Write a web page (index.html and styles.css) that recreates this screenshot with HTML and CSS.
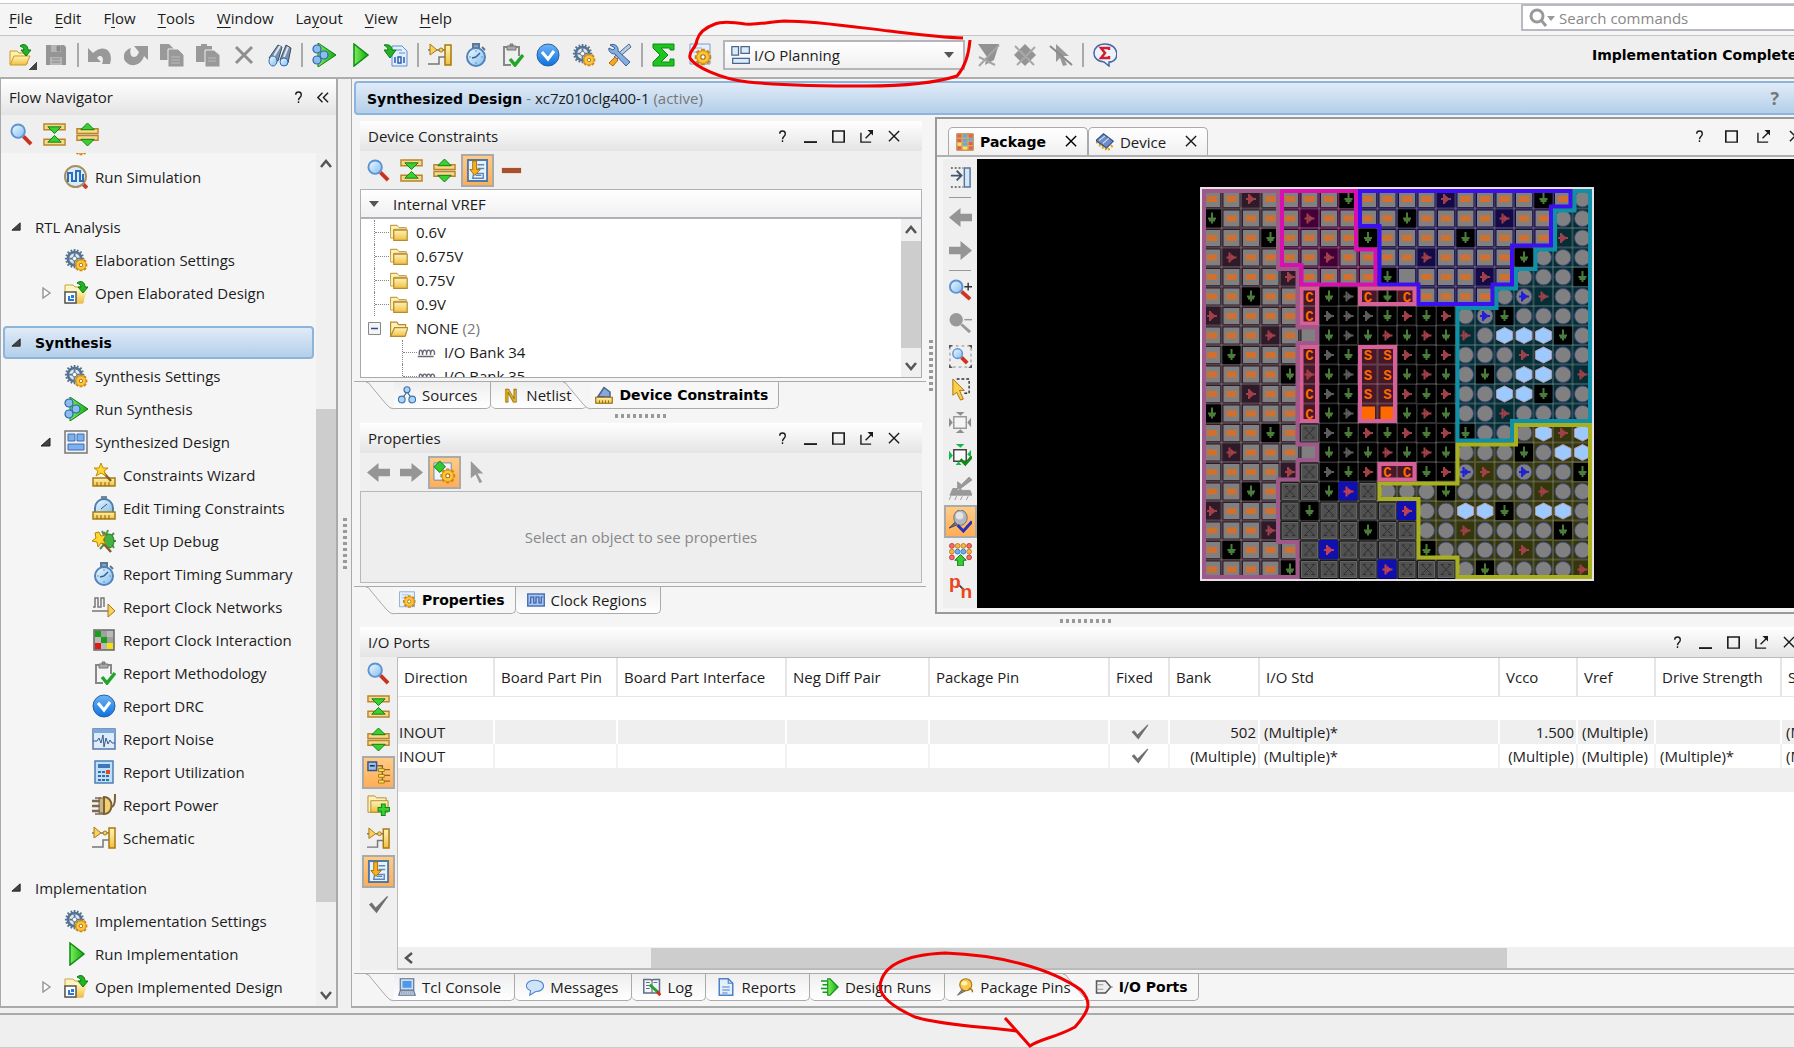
FILE: index.html
```html
<!DOCTYPE html>
<html lang="en">

<head>
  <meta charset="UTF-8">
  <meta name="viewport" content="width=device-width, initial-scale=1.0">
  <title>Synthesized Design - I/O Planning</title>
  <link rel="stylesheet" href="styles.css">
</head>
<body>
  <!-- icon sprite -->
  <svg class="sprite" aria-hidden="true">
    <defs>
      <linearGradient id="gold" x1="0" y1="0" x2="0" y2="1"><stop offset="0" stop-color="#fff3b8"/><stop offset="1" stop-color="#f0c040"/></linearGradient>
      <linearGradient id="sky" x1="0" y1="0" x2="1" y2="1"><stop offset="0" stop-color="#f4fbff"/><stop offset="1" stop-color="#7fbdf0"/></linearGradient>
      <linearGradient id="lime" x1="0" y1="0" x2="1" y2="0"><stop offset="0" stop-color="#7df05a"/><stop offset="1" stop-color="#12a812"/></linearGradient>
      <linearGradient id="royal" x1="0" y1="0" x2="0" y2="1"><stop offset="0" stop-color="#6fb4f5"/><stop offset="1" stop-color="#0a72e0"/></linearGradient>
      <g id="greenArrow"><path d="M12 3c4-3 8-1 8 4h3l-5 6-5-6h3c0-2-2-3-4-4z" fill="#22b422" stroke="#0b7a12"/></g>
      <g id="cog"><path d="M12 1v22M1 12h22M4 4l16 16M20 4L4 20M8 2l8 20M16 2L8 22M2 8l20 8M2 16l20-8" stroke="#567391" stroke-width="2"/><circle cx="12" cy="12" r="7.500" fill="#dfe8f0" stroke="#567391" stroke-width="3"/><path d="M12 6v12M6 12h12" stroke="#567391" stroke-width="2"/><circle cx="12" cy="12" r="2.500" fill="#fff" stroke="#567391"/></g>
      <g id="goldCog"><path d="M12 1v22M1 12h22M4 4l16 16M20 4L4 20" stroke="#c98510" stroke-width="5"/><circle cx="12" cy="12" r="8.500" fill="#ffc63a" stroke="#d8961c" stroke-width="1.500"/><circle cx="12" cy="12" r="3" fill="#fff" stroke="#a86a08" stroke-width="1.500"/></g>
    </defs>
    <symbol id="i-open" viewBox="0 0 24 24"><path d="M2 8h7l2 2h8v11H2z" fill="#fdf0a8" stroke="#c99a2a"/><path d="M6 13h16l-4 9H2z" fill="url(#gold)" stroke="#c99a2a"/><use href="#greenArrow"/></symbol>
    <symbol id="i-save" viewBox="0 0 24 24"><path d="M2 2h18l2 2v18H2z" fill="#959595"/><path d="M7 2h10v7H7zM6 14h12v8H6z" fill="#b5b5b5"/><path d="M13 3h3v5h-3zM8 16h8M8 19h8" stroke="#8a8a8a" fill="#8a8a8a"/></symbol>
    <symbol id="i-undo" viewBox="0 0 24 24"><path d="M0 5v14h13l-4-4c3-4 8-2 5 6h8C26 8 16 0 5 10z" fill="#999"/></symbol>
    <symbol id="i-redo" viewBox="0 0 24 24"><path d="M24 3v14l-4-4c-2 8-11 12-17 7-6-5-3-13 4-15-2 5 0 9 3 9s4-3 5-5l-5-6z" fill="#999"/></symbol>
    <symbol id="i-copy" viewBox="0 0 24 24"><path d="M0 1h9l5 5v11H0z" fill="#999"/><path d="M8 6h10l6 6v12H8z" fill="#999" stroke="#eee"/><path d="M11 14h9M11 17h9M11 20h9" stroke="#bbb"/></symbol>
    <symbol id="i-paste" viewBox="0 0 24 24"><path d="M0 3h16v16H0zM5 1h6v3H5z" fill="#999"/><path d="M9 7h9l6 5v12H9z" fill="#999" stroke="#eee"/><path d="M12 15h8M12 18h8" stroke="#bbb"/></symbol>
    <symbol id="i-delete" viewBox="0 0 24 24"><path d="M4 4l16 16M20 4L4 20" stroke="#8f8f8f" stroke-width="3"/></symbol>
    <symbol id="i-find" viewBox="0 0 24 24"><path d="M10 2l4 2-4 14-9-3zM18 2l5 3-3 15-8-3z" fill="#7b8faa" stroke="#3b4d66"/><path d="M12 3l-6 10M20 4l-4 10" stroke="#dbe6f4" stroke-width="2"/><ellipse cx="5" cy="18" rx="4" ry="5" fill="url(#sky)" stroke="#2c6cb0"/><ellipse cx="16" cy="19" rx="4" ry="4" fill="url(#sky)" stroke="#2c6cb0"/></symbol>
    <symbol id="i-synth" viewBox="0 0 24 24"><path d="M6 0l18 12L6 24z" fill="url(#lime)" stroke="#0a7c12"/><g fill="#8abdf0" stroke="#2f63a8" stroke-width="1.200"><circle cx="5" cy="6" r="4"/><circle cx="5" cy="17" r="4"/><circle cx="12" cy="12" r="4"/></g></symbol>
    <symbol id="i-run" viewBox="0 0 24 24"><path d="M6 1l14 11L6 23z" fill="url(#lime)" stroke="#0b8a14" stroke-width="1.500"/></symbol>
    <symbol id="i-bits" viewBox="0 0 24 24"><path d="M8 3h10l5 5v15H8z" fill="#e4effc" stroke="#5a8fd0"/><path d="M12 7h6M15 10h6" stroke="#5a8fd0"/><path d="M11 14v6M20 14v6M14 14h3v6h-3z" fill="none" stroke="#2a5fb0" stroke-width="1.500"/><path d="M0 2c5-1 8 1 8 5h4l-6 8-6-8h4c0-2-1-3-4-5z" fill="#22b422" stroke="#0b7a12"/></symbol>
    <symbol id="i-schem" viewBox="0 0 24 24"><path d="M17 2h6v20h-6z" fill="url(#gold)" stroke="#a8780c" stroke-width="1.500"/><path d="M2 1v11l7-5z" fill="#f8d060" stroke="#a8780c"/><path d="M9 7h8M0 7h2M0 21h11v-7h6" fill="none" stroke="#777" stroke-width="1.500"/><circle cx="13" cy="7" r="2" fill="#f8d060" stroke="#a8780c"/></symbol>
    <symbol id="i-watch" viewBox="0 0 24 24"><path d="M9 1h6v4H9zM18 4l3 3" fill="#8aa0b8" stroke="#587896" stroke-width="2"/><circle cx="12" cy="14" r="9" fill="url(#sky)" stroke="#4f83ba" stroke-width="2"/><path d="M12 14l4-4M12 14l-4 1" stroke="#335f98" stroke-width="1.500"/><path d="M12 7v2M12 19v2M5 14h2M17 14h2" stroke="#6a91bb"/></symbol>
    <symbol id="i-method" viewBox="0 0 24 24"><path d="M8 4H4v18h7M16 4h3v9" fill="none" stroke="#888" stroke-width="2"/><path d="M7 3h9v4H7zM10 1h3v2h-3z" fill="#aaa" stroke="#777"/><path d="M10 16l5 6 8-10" fill="none" stroke="#23a52b" stroke-width="3.500"/></symbol>
    <symbol id="i-drc" viewBox="0 0 24 24"><circle cx="12" cy="12" r="11" fill="url(#royal)" stroke="#2b5f9e"/><path d="M6 9l6 7 6-8" fill="none" stroke="#fff" stroke-width="3"/></symbol>
    <symbol id="i-gear" viewBox="0 0 24 24"><g transform="scale(.88)"><use href="#cog"/></g><g transform="translate(10 10) scale(.58)"><use href="#goldCog"/></g></symbol>
    <symbol id="i-tools" viewBox="0 0 24 24"><path d="M21 1l2 3L9 16l-3-2z" fill="#b8cbe0" stroke="#4a6a92"/><path d="M2 2c4-2 9 1 8 6l12 11-4 4L7 11C2 11 0 7 1 5l4 2 2-2z" fill="#86aee0" stroke="#355f96"/><path d="M7 14l3 3-5 6-4-3z" fill="#f6a623" stroke="#b46d0a"/></symbol>
    <symbol id="i-sigma" viewBox="0 0 24 24"><path d="M1 1h21v6h-4V5H9l7 7-7 7h9v-3h4v7H1v-4l7-7-7-7z" fill="#1fc41f" stroke="#0c8a12"/></symbol>
    <symbol id="i-prop" viewBox="0 0 24 24"><path d="M2 1h20v20H2z" fill="#e6f0fc" stroke="#7d9cc8"/><path d="M5 5h9M5 9h5" stroke="#9ab6dc"/><g transform="translate(6 5) scale(.75)"><use href="#goldCog"/></g></symbol>
    <symbol id="i-propsel" viewBox="0 0 24 24"><path d="M1 2h18v18H1z" fill="#eef4fc" stroke="#6d89b0"/><g transform="translate(7 7) scale(.7)"><use href="#goldCog"/></g><path d="M7 0l6 6-6 6-6-6z" fill="#32c832" stroke="#0d7a10"/></symbol>
    <symbol id="i-layout" viewBox="0 0 24 24"><g fill="#dcebfb" stroke="#4a668c" stroke-width="1.500"><path d="M1 2h8v10H1zM12 2h10v8H12zM2 16h20v6H2z"/></g></symbol>
    <symbol id="i-design" viewBox="0 0 24 24"><path d="M1 1h22v22H1z" fill="#f2f2f2" stroke="#777" stroke-width="1.500"/><g fill="#7fb0ee" stroke="#3a6cb4"><path d="M4 4h7v7H4zM13 4h7v7h-7zM4 14h16v6H4z"/></g></symbol>
    <symbol id="i-noarrow" viewBox="0 0 24 24"><path d="M1 1h21l-5 16-9 5 2-8z" fill="#929292"/><path d="M22 2L2 23M2 14l16 8" stroke="#a5a5a5" stroke-width="2"/></symbol>
    <symbol id="i-nodiamond" viewBox="0 0 24 24"><path d="M12 1l11 11-11 11L1 12z" fill="#949494"/><path d="M2 3l19 19M22 4L4 22" stroke="#a8a8a8" stroke-width="2"/></symbol>
    <symbol id="i-nocursor" viewBox="0 0 24 24"><path d="M7 1l13 12h-6l4 9-4 1-3-8-4 4z" fill="#999"/><path d="M1 3l22 19" stroke="#8a8a8a" stroke-width="2"/></symbol>
    <symbol id="i-feedback" viewBox="0 0 24 24"><path d="M12 1c15 0 15 18 4 18v4l-5-4C-3 18-2 1 12 1z" fill="#eef3fb" stroke="#4467a8" stroke-width="1.500"/><path d="M16 7V5H8l4 5-4 5h8v-2" fill="none" stroke="#d31c30" stroke-width="2.500"/></symbol>
    <symbol id="i-search" viewBox="0 0 24 24"><path d="M14 14l8 8" stroke="#c8331f" stroke-width="4"/><circle cx="8.500" cy="8.500" r="7" fill="url(#sky)" stroke="#5b93d4" stroke-width="2"/></symbol>
    <symbol id="i-collapse" viewBox="0 0 24 24"><path d="M1 1h22v6H1zM1 17h22v6H1z" fill="#f8d88c" stroke="#b9852c" stroke-width="1.500"/><path d="M5 4h14l-7 7zM5 20h14l-7-7z" fill="#3ad030" stroke="#127c12"/></symbol>
    <symbol id="i-expand" viewBox="0 0 24 24"><path d="M1 6h22v5H1zM1 13h22v5H1z" fill="#f8d88c" stroke="#b9852c" stroke-width="1.500"/><path d="M5 7h14l-7-7zM5 17h14l-7 7z" fill="#3ad030" stroke="#127c12"/></symbol>
    <symbol id="i-sim" viewBox="0 0 24 24"><path d="M17 17l6 6" stroke="#c4402a" stroke-width="4"/><circle cx="11.500" cy="11.500" r="10.500" fill="#d8ecff" stroke="#a98f5c" stroke-width="2"/><path d="M4 17V8h4v8h4V6h4v10h3V9" fill="none" stroke="#2d6dbb" stroke-width="2"/></symbol>
    <symbol id="i-opendes" viewBox="0 0 24 24"><path d="M1 4h8l2 2h8v16H1z" fill="#fdf4c0" stroke="#c9a040"/><path d="M13 10h10l-4 12h-8z" fill="url(#gold)"/><g transform="translate(1 -1)"><use href="#greenArrow"/></g><path d="M1 11h11v11H1z" fill="#fff" stroke="#555" stroke-width="1.500"/><path d="M4 15h2v3h4v2H4zM7 14h3v3H7z" fill="#2878e0"/></symbol>
    <symbol id="i-wizard" viewBox="0 0 24 24"><path d="M1 15h22v8H1z" fill="url(#gold)" stroke="#a67c10" stroke-width="1.500"/><path d="M5 19v4M9 19v4M13 19v4M17 19v4" stroke="#8a6508"/><path d="M11 9l8 9" stroke="#8a5a20" stroke-width="2.500"/><path d="M9 0l2 5h5l-4 3 2 5-5-3-5 3 2-5-4-3h5z" fill="#ffd92e" stroke="#c18c08"/></symbol>
    <symbol id="i-edit" viewBox="0 0 24 24"><path d="M9 0h6v4H9z" fill="#789"/><path d="M3 17V12a9 9 0 0118 0v5z" fill="url(#sky)" stroke="#4d7fae" stroke-width="2"/><path d="M9 13l6-5" stroke="#456"/><path d="M1 16h22v7H1z" fill="url(#gold)" stroke="#a67c10" stroke-width="1.500"/><path d="M5 19v4M9 19v4M13 19v4M17 19v4" stroke="#8a6508"/></symbol>
    <symbol id="i-debug" viewBox="0 0 24 24"><path d="M12 3l10 16M22 4L8 20M24 12H12M10 2l2 4M16 1l-2 5" stroke="#4d8f4d" stroke-width="2"/><ellipse cx="17" cy="12" rx="5" ry="7" fill="#42b342" stroke="#1e7a1e"/><path d="M10 13l9 10" stroke="#8a5a20" stroke-width="2.500"/><path d="M7 3l2 4 5-1-3 5 3 4-5-1-3 4-1-5-5-1 4-3-1-5z" fill="#ffd92e" stroke="#b77f08"/></symbol>
    <symbol id="i-clknet" viewBox="0 0 24 24"><path d="M1 12h2V3h3v9h3V3h3v9M0 16h16" fill="none" stroke="#777" stroke-width="1.500"/><path d="M16 9v13l7-6z" fill="#f8d060" stroke="#a8780c"/></symbol>
    <symbol id="i-clkint" viewBox="0 0 24 24"><path d="M2 2h20v20H2z" fill="#b9b9b9" stroke="#666" stroke-width="1.500"/><path d="M3 3h6v6H3zM9 9h6v6H9z" fill="#18a018"/><path d="M3 15h6v6H3z" fill="#e01818"/><path d="M15 15h6v6h-6z" fill="#f4e010"/><path d="M9 3h6v6H9zM15 9h6v6h-6z" fill="#a0a0a0"/></symbol>
    <symbol id="i-noise" viewBox="0 0 24 24"><path d="M1 2h22v20H1z" fill="#dcecfb" stroke="#5578a8" stroke-width="1.500"/><path d="M1 2h22v4H1z" fill="#7ba7dc"/><path d="M1 14h4l2-3 2 5 2-8 1 12 2-9 2 6 2-4 2 3h3" fill="none" stroke="#3b5a85"/></symbol>
    <symbol id="i-util" viewBox="0 0 24 24"><path d="M3 1h18v22H3z" fill="#bfe0fb" stroke="#4f7fae" stroke-width="1.500"/><path d="M6 4h12v4H6z" fill="#3f78b8"/><path d="M6 11h3v2H6zM10 11h3v2h-3zM6 15h3v2H6zM10 15h3v2h-3zM14 15h3v2h-3zM6 19h3v2H6zM10 19h3v2h-3zM14 19h3v2h-3z" fill="#3a6ba8"/><path d="M14 10h4v4h-4z" fill="#e04a24"/></symbol>
    <symbol id="i-power" viewBox="0 0 24 24"><path d="M7 5h5v15H7z" fill="#c8b48c" stroke="#7a6238"/><path d="M12 4c10 0 10 17 0 17z" fill="#f4cf70" stroke="#7a6238" stroke-width="2"/><path d="M0 8h8M0 13h8M0 18h8" stroke="#7a6a50" stroke-width="2.500"/><path d="M3 5h6M3 21h8" stroke="#7a6a50" stroke-width="1.500"/><path d="M20 14c3-2 3-6 3-13" fill="none" stroke="#7a6238" stroke-width="2"/></symbol>
    <symbol id="i-auto" viewBox="0 0 24 24"><path d="M2 1h20v22H2z" fill="#e8f2fd" stroke="#4d79ad" stroke-width="2"/><path d="M12 6h7M12 10h7M8 15h10v5H7zM10 17h6" fill="none" stroke="#5d88ba" stroke-width="1.500"/><path d="M7 2h4v9h4l-6 6-5-6h3z" fill="#f5b21e" stroke="#a8700c"/></symbol>
    <symbol id="i-minus" viewBox="0 0 24 24"><path d="M1 9h22v6H1z" fill="#a8502a"/></symbol>
    <symbol id="i-folder" viewBox="0 0 24 24"><path d="M2 3h8l2 3h8v4H2z" fill="#fbe6a0" stroke="#b58b30"/><path d="M2 3v16h4V8h16V6h-9l-3-3z" fill="#fff0b4" stroke="#b58b30"/><path d="M6 9h17v13H6z" fill="url(#gold)" stroke="#b58b30" stroke-width="1.500"/></symbol>
    <symbol id="i-folderopen" viewBox="0 0 24 24"><path d="M2 4h8l2 3h9v14H2z" fill="#fdf0b8" stroke="#b58b30" stroke-width="1.500"/><path d="M7 11h17l-4 11H2z" fill="url(#gold)" stroke="#b58b30" stroke-width="1.500"/></symbol>
    <symbol id="i-bank" viewBox="0 0 24 24"><path d="M1 17h20M3 15c-1-9 4-7 4 0 0-9 6-7 5 0 0-9 6-7 5 0 0-9 6-7 5 0" fill="none" stroke="#667" stroke-width="1.800"/></symbol>
    <symbol id="i-sources" viewBox="0 0 24 24"><path d="M12 8L6 16M12 8l6 8" stroke="#456" stroke-width="1.500"/><g fill="#a8d4f8" stroke="#3a70b4" stroke-width="1.500"><circle cx="12" cy="5" r="4"/><circle cx="5" cy="18" r="4.500"/><circle cx="19" cy="18" r="4.500"/></g></symbol>
    <symbol id="i-devcon" viewBox="0 0 24 24"><path d="M4 14L12 2l8 6v7z" fill="#88a8d8" stroke="#45618e" stroke-width="2"/><path d="M1 15h22v8H1z" fill="url(#gold)" stroke="#8e6a0c" stroke-width="1.500"/><path d="M6 19v4M10 19v4M14 19v4M18 19v4" stroke="#7a5c08"/></symbol>
    <symbol id="i-clkreg" viewBox="0 0 24 24"><path d="M1 4h22v16H1z" fill="#a8c8f4" stroke="#4a72b8" stroke-width="2"/><path d="M3 16h2V8h4v8h3V8h4v8h3V8h2" fill="none" stroke="#2f549c" stroke-width="1.500"/></symbol>
    <symbol id="i-left" viewBox="0 0 24 24"><path d="M0 12L12 2v6h12v8H12v6z" fill="#959595"/></symbol>
    <symbol id="i-right" viewBox="0 0 24 24"><path d="M24 12L12 2v6H0v8h12v6z" fill="#959595"/></symbol>
    <symbol id="i-cursor" viewBox="0 0 24 24"><path d="M5 0l13 13h-6l5 9-3 1-4-9-5 4z" fill="#999"/></symbol>
    <symbol id="i-package" viewBox="0 0 24 24"><path d="M1 1h22v22H1z" fill="#d8a850" stroke="#a06a20"/><g fill="#e85a5a"><path d="M2 2h5v4H2zM17 2h5v4h-5zM2 8h5v4H2zM2 18h5v4H2zM17 18h5v4h-5zM17 12h5v4h-5z"/></g><g fill="#5fa8ee"><path d="M9 2h6v4H9zM9 8h6v4H9zM17 7h5v4h-5zM9 13h6v4H9z"/></g><path d="M9 18h6v4H9zM2 13h5v4H2z" fill="#f8e070"/></symbol>
    <symbol id="i-device" viewBox="0 0 24 24"><path d="M1 9v5M5 13v5M9 16v5M13 19v4M16 20l2 3M20 16l2 3" stroke="#d8a418" stroke-width="2.500"/><path d="M0 10L10 1l13 10-9 9z" fill="#6f8cc4" stroke="#34508a" stroke-width="1.500"/><path d="M4 10l8-6M9 14l8-7" stroke="#c4d4f0" stroke-width="1.500"/></symbol>
    <symbol id="i-dock" viewBox="0 0 24 24"><path d="M2 2h13M2 22h13" stroke="#555" stroke-dasharray="2 2" stroke-width="1.500"/><path d="M2 10h10M8 5l5 5-5 5" fill="none" stroke="#44546c" stroke-width="2"/><path d="M16 2h6v20h-6z" fill="#d4e8fb" stroke="#56749c" stroke-width="1.500"/></symbol>
    <symbol id="i-zoomin" viewBox="0 0 24 24"><path d="M13 13l9 8" stroke="#d0341f" stroke-width="4"/><circle cx="7.500" cy="8" r="6.500" fill="url(#sky)" stroke="#5b93d4" stroke-width="2"/><path d="M16 8h8M20 4v8" stroke="#333" stroke-width="1.500"/></symbol>
    <symbol id="i-zoomout" viewBox="0 0 24 24"><path d="M13 13l9 8" stroke="#999" stroke-width="3"/><circle cx="7.500" cy="8" r="7" fill="#999"/><path d="M16 8h8" stroke="#999" stroke-width="1.500"/></symbol>
    <symbol id="i-zoomfit" viewBox="0 0 24 24"><path d="M1 1h22v22H1z" fill="none" stroke="#888" stroke-dasharray="3 3"/><path d="M0 0h4L0 4zM24 0v4l-4-4zM0 24v-4l4 4zM24 24h-4l4-4z" fill="#555"/><path d="M13 13l6 6" stroke="#d0341f" stroke-width="4"/><circle cx="9" cy="9" r="5" fill="url(#sky)" stroke="#5b93d4" stroke-width="1.500"/></symbol>
    <symbol id="i-areasel" viewBox="0 0 24 24"><path d="M8 1h13v15h-6" fill="none" stroke="#333" stroke-dasharray="3 2" stroke-width="1.500"/><path d="M4 1l12 12h-5l4 9-3 1-4-8-4 3z" fill="#fbcf4a" stroke="#a8740c"/></symbol>
    <symbol id="i-fit" viewBox="0 0 24 24"><path d="M5 6h13v12H5z" fill="#f4f4f4" stroke="#999" stroke-width="1.500"/><path d="M7 1h9l-4 4zM7 23h9l-4-4zM0 7v10l4-5zM23 7v10l-4-5z" fill="#8e8e8e"/></symbol>
    <symbol id="i-fitok" viewBox="0 0 24 24"><path d="M5 6h13v12H5z" fill="#fafafa" stroke="#444" stroke-width="1.500"/><path d="M7 0h9l-4 4zM7 22h6l-3-4zM0 7v10l4-5zM23 6v8l-4-3z" fill="#15b84a"/><path d="M12 16l5 5 7-8" fill="none" stroke="#128a18" stroke-width="3"/></symbol>
    <symbol id="i-route" viewBox="0 0 24 24"><path d="M9 5v10l3-3L24 3l-3-3-8 8zM4 12h7l3 2h8l2 5H1zM2 20l-2 4M8 20l-2 4M14 20l-2 4M20 20l-2 4" fill="#999" stroke="#999"/></symbol>
    <symbol id="i-pincheck" viewBox="0 0 24 24"><path d="M8 11L0 19l12-5z" fill="#68768a" stroke="#445"/><ellipse cx="12" cy="8" rx="7" ry="8" fill="#b4b8be" stroke="#6a6f78"/><ellipse cx="11" cy="6" rx="4" ry="4" fill="#e4e4e4"/><path d="M9 16l6 6 9-10" fill="none" stroke="#2a30b8" stroke-width="3"/></symbol>
    <symbol id="i-pinup" viewBox="0 0 24 24"><g fill="#f4b73c" stroke="#c08028"><circle cx="9" cy="3" r="2.500"/><circle cx="15" cy="3" r="2.500"/><circle cx="3" cy="9" r="2.500"/><circle cx="21" cy="9" r="2.500"/></g><g fill="#f07068" stroke="#c03c3c"><circle cx="3" cy="3" r="2.500"/><circle cx="21" cy="3" r="2.500"/><circle cx="3" cy="15" r="2.500"/><circle cx="21" cy="15" r="2.500"/></g><g fill="#6fb0f4" stroke="#3c78c8"><circle cx="9" cy="9" r="2.500"/><circle cx="15" cy="9" r="2.500"/></g><path d="M12 12l6 6h-3v6H9v-6H6z" fill="#3cc83a" stroke="#127c12"/></symbol>
    <symbol id="i-group" viewBox="0 0 24 24"><path d="M10 5h6v17M16 9h8M16 15h8M16 21h8" fill="none" stroke="#8a6a30" stroke-width="1.500"/><path d="M1 1h9v9H1z" fill="#9dc0ee" stroke="#345488" stroke-width="1.500"/><path d="M3 5h5" stroke="#123" stroke-width="1.500"/><path d="M12 8h6v3h-6zM12 14h6v3h-6zM12 20h6v3h-6z" fill="#fbe070" stroke="#a8780c"/></symbol>
    <symbol id="i-addfolder" viewBox="0 0 24 24"><path d="M1 2h7l2 2h10v15H1z" fill="#fdf0b8" stroke="#b58b30"/><path d="M4 7h18v12H4z" fill="url(#gold)" stroke="#b58b30"/><path d="M17 10v13M11 16h13" stroke="#0e8a16" stroke-width="5"/><path d="M17 11v11M12 16h11" stroke="#35d035" stroke-width="3"/></symbol>
    <symbol id="i-check" viewBox="0 0 24 24"><path d="M2 12l3-2 4 5L21 3l1 1L10 21z" fill="#707070"/></symbol>
    <symbol id="i-console" viewBox="0 0 24 24"><path d="M3 1h18v15H3z" fill="#d0dcec" stroke="#566f94" stroke-width="1.500"/><path d="M6 4h12v9H6z" fill="#4b98ec"/><path d="M3 17h18l2 6H1z" fill="#c8d2e0" stroke="#566f94" stroke-width="1.500"/><path d="M4 20h16" stroke="#566f94" stroke-dasharray="2 1"/></symbol>
    <symbol id="i-messages" viewBox="0 0 24 24"><path d="M12 3c15 0 15 15 1 15l-8 5 1-6C-4 12 1 3 12 3z" fill="#cfe4fa" stroke="#4f86cc" stroke-width="1.500"/></symbol>
    <symbol id="i-log" viewBox="0 0 24 24"><path d="M1 2h9l2 1 2-1h8v18H1z" fill="#f3f6fa" stroke="#5f6f86" stroke-width="2"/><path d="M12 3v17M4 6h5M4 10h5M14 6h5M4 14h5" stroke="#5f6f86" stroke-width="1.500"/><path d="M9 9l11 10" stroke="#25a030" stroke-width="4"/><path d="M19 18l4 5" stroke="#d03018" stroke-width="4"/></symbol>
    <symbol id="i-reports" viewBox="0 0 24 24"><path d="M3 1h12l6 6v16H3z" fill="#e4effc" stroke="#4d80c8" stroke-width="2"/><path d="M15 1v6h6M7 12h10M7 16h10M7 20h7" fill="none" stroke="#4d80c8" stroke-width="1.500"/></symbol>
    <symbol id="i-runs" viewBox="0 0 24 24"><path d="M9 1h3l11 11-11 11H9z" fill="url(#lime)" stroke="#0b8a14" stroke-width="1.500"/><path d="M0 4h8M2 9h7M0 14h8M2 19h7" stroke="#109a20" stroke-width="2"/></symbol>
    <symbol id="i-pin" viewBox="0 0 24 24"><path d="M9 14l-7 9 11-6z" fill="#7d8794" stroke="#556"/><ellipse cx="13" cy="9" rx="8" ry="8" fill="#f8c94e" stroke="#a8780c" stroke-width="1.500"/><ellipse cx="11" cy="7" rx="4" ry="3" fill="#fff0b8"/><path d="M17 14c3 0 5 2 5 5" fill="none" stroke="#a8780c" stroke-width="2"/></symbol>
    <symbol id="i-ports" viewBox="0 0 24 24"><path d="M2 4h12l7 8-7 8H2z" fill="#eee" stroke="#555" stroke-width="2"/><path d="M2 9h9M2 15h9M21 12h3" stroke="#999" stroke-width="1.500"/></symbol>
    <symbol id="w-help" viewBox="0 0 14 14"><path d="M4 4c0-4 6-4 6 0 0 3-3 3-3 6M7 11v2" fill="none" stroke="currentColor" stroke-width="1.500"/></symbol>
    <symbol id="w-min" viewBox="0 0 14 14"><path d="M0 13h14" stroke="currentColor" stroke-width="2"/></symbol>
    <symbol id="w-max" viewBox="0 0 14 14"><path d="M0 1h14v12H0zM1 1v12M13 1v12" fill="none" stroke="currentColor" stroke-width="1.500"/></symbol>
    <symbol id="w-float" viewBox="0 0 14 14"><path d="M1 3v10h11M6 9l6-6" fill="none" stroke="currentColor" stroke-width="1.500"/><path d="M8 0h6v6z" fill="currentColor"/></symbol>
    <symbol id="w-close" viewBox="0 0 14 14"><path d="M1 1l11 11M12 1L1 12" stroke="currentColor" stroke-width="1.500"/></symbol>
    <symbol id="w-hide" viewBox="0 0 14 14"><path d="M7 2L2 7l5 5M13 2L8 7l5 5" fill="none" stroke="currentColor" stroke-width="1.500"/></symbol>
    <symbol id="w-up" viewBox="0 0 12 12"><path d="M1 9l5-6 5 6" fill="none" stroke="#555" stroke-width="2.500"/></symbol>
    <symbol id="w-down" viewBox="0 0 12 12"><path d="M1 3l5 6 5-6" fill="none" stroke="#555" stroke-width="2.500"/></symbol>
    <symbol id="w-left" viewBox="0 0 12 12"><path d="M9 1L3 6l6 5" fill="none" stroke="#555" stroke-width="2.500"/></symbol>
    <symbol id="w-caret" viewBox="0 0 12 12"><path d="M1 3h10L6 9z" fill="#555"/></symbol>
    <symbol id="w-open" viewBox="0 0 12 12"><path d="M1 10h9V2z" fill="#444" stroke="#222"/></symbol>
    <symbol id="w-closed" viewBox="0 0 12 12"><path d="M3 1l7 5-7 5z" fill="#fff" stroke="#999" stroke-width="1.500"/></symbol>
    <symbol id="w-slant" viewBox="0 0 28 28"><path d="M0 0h28v28C24 28 22 24 20 22L5 4Q3 0 0 0z" fill="#f5f5f5"/><path d="M0 0Q3 0 5 4L20 22q4 5 8 5" fill="none" stroke="#aaa"/></symbol>
  </svg>

  <div class="app">
    <nav class="menubar">
      <a href="#"><u>F</u>ile</a>
      <a href="#"><u>E</u>dit</a>
      <a href="#">F<u>l</u>ow</a>
      <a href="#"><u>T</u>ools</a>
      <a href="#"><u>W</u>indow</a>
      <a href="#">La<u>y</u>out</a>
      <a href="#"><u>V</u>iew</a>
      <a href="#"><u>H</u>elp</a>
      <label class="search">
        <svg viewBox="0 0 28 20"><circle cx="8" cy="8" r="6" fill="none" stroke="#999" stroke-width="3"/><path d="M12 12l5 6" stroke="#999" stroke-width="3"/><path d="M18 8h8l-4 5z" fill="#999"/></svg>
        <input type="text" placeholder="Search commands" aria-label="Search commands">
      </label>
    </nav>

    <div class="toolbar">
      <button class="has-menu" aria-label="Open"><svg><use href="#i-open"/></svg></button>
      <button aria-label="Save"><svg><use href="#i-save"/></svg></button>
      <i class="sep"></i>
      <button aria-label="Undo"><svg><use href="#i-undo"/></svg></button>
      <button aria-label="Redo"><svg><use href="#i-redo"/></svg></button>
      <button aria-label="Copy"><svg><use href="#i-copy"/></svg></button>
      <button aria-label="Paste"><svg><use href="#i-paste"/></svg></button>
      <button aria-label="Delete"><svg><use href="#i-delete"/></svg></button>
      <button aria-label="Find"><svg><use href="#i-find"/></svg></button>
      <i class="sep"></i>
      <button aria-label="Run Synthesis"><svg><use href="#i-synth"/></svg></button>
      <button aria-label="Run Implementation"><svg><use href="#i-run"/></svg></button>
      <button aria-label="Generate Bitstream"><svg><use href="#i-bits"/></svg></button>
      <i class="sep"></i>
      <button aria-label="Schematic"><svg><use href="#i-schem"/></svg></button>
      <button aria-label="Report Timing Summary"><svg><use href="#i-watch"/></svg></button>
      <button aria-label="Report Methodology"><svg><use href="#i-method"/></svg></button>
      <button aria-label="Report DRC"><svg><use href="#i-drc"/></svg></button>
      <button aria-label="Settings"><svg><use href="#i-gear"/></svg></button>
      <button aria-label="Tools"><svg><use href="#i-tools"/></svg></button>
      <i class="sep"></i>
      <button aria-label="Project Summary"><svg><use href="#i-sigma"/></svg></button>
      <button aria-label="Properties"><svg><use href="#i-prop"/></svg></button>
      <div class="combo">
        <svg class="combo-icon"><use href="#i-layout"/></svg>
        <select aria-label="Layout"><option>I/O Planning</option></select>
        <svg class="combo-caret"><use href="#w-caret"/></svg>
      </div>
      <button aria-label="Unhighlight"><svg><use href="#i-noarrow"/></svg></button>
      <button aria-label="Unmark"><svg><use href="#i-nodiamond"/></svg></button>
      <button aria-label="Unselect"><svg><use href="#i-nocursor"/></svg></button>
      <i class="sep"></i>
      <button aria-label="Feedback"><svg><use href="#i-feedback"/></svg></button>
      <strong class="run-state">Implementation Complete</strong>
    </div>

    <main class="main">
      <aside class="flow">
        <header class="panel-head">
          <h2>Flow Navigator</h2>
          <button aria-label="Help"><svg><use href="#w-help"/></svg></button>
          <button aria-label="Hide"><svg><use href="#w-hide"/></svg></button>
        </header>
        <div class="panel-tools">
          <button aria-label="Search"><svg><use href="#i-search"/></svg></button>
          <button aria-label="Collapse All"><svg><use href="#i-collapse"/></svg></button>
          <button aria-label="Expand All"><svg><use href="#i-expand"/></svg></button>
        </div>
        <div class="flow-body">
          <ul class="flow-list">
            <li class="item hidden-part"><svg><use href="#i-gear"/></svg></li>
            <li class="item"><svg><use href="#i-sim"/></svg>Run Simulation</li>
            <li class="section"><svg><use href="#w-open"/></svg>RTL Analysis</li>
            <li class="item"><svg><use href="#i-gear"/></svg>Elaboration Settings</li>
            <li class="item with-twisty"><svg class="twisty"><use href="#w-closed"/></svg><svg><use href="#i-opendes"/></svg>Open Elaborated Design</li>
            <li class="section selected"><svg><use href="#w-open"/></svg>Synthesis</li>
            <li class="item"><svg><use href="#i-gear"/></svg>Synthesis Settings</li>
            <li class="item"><svg><use href="#i-synth"/></svg>Run Synthesis</li>
            <li class="item with-twisty"><svg class="twisty"><use href="#w-open"/></svg><svg><use href="#i-design"/></svg>Synthesized Design</li>
            <li class="item sub"><svg><use href="#i-wizard"/></svg>Constraints Wizard</li>
            <li class="item sub"><svg><use href="#i-edit"/></svg>Edit Timing Constraints</li>
            <li class="item sub"><svg><use href="#i-debug"/></svg>Set Up Debug</li>
            <li class="item sub"><svg><use href="#i-watch"/></svg>Report Timing Summary</li>
            <li class="item sub"><svg><use href="#i-clknet"/></svg>Report Clock Networks</li>
            <li class="item sub"><svg><use href="#i-clkint"/></svg>Report Clock Interaction</li>
            <li class="item sub"><svg><use href="#i-method"/></svg>Report Methodology</li>
            <li class="item sub"><svg><use href="#i-drc"/></svg>Report DRC</li>
            <li class="item sub"><svg><use href="#i-noise"/></svg>Report Noise</li>
            <li class="item sub"><svg><use href="#i-util"/></svg>Report Utilization</li>
            <li class="item sub"><svg><use href="#i-power"/></svg>Report Power</li>
            <li class="item sub"><svg><use href="#i-schem"/></svg>Schematic</li>
            <li class="section"><svg><use href="#w-open"/></svg>Implementation</li>
            <li class="item"><svg><use href="#i-gear"/></svg>Implementation Settings</li>
            <li class="item"><svg><use href="#i-run"/></svg>Run Implementation</li>
            <li class="item with-twisty"><svg class="twisty"><use href="#w-closed"/></svg><svg><use href="#i-opendes"/></svg>Open Implemented Design</li>
          </ul>
          <div class="scroll">
            <svg><use href="#w-up"/></svg>
            <div class="track flow-track"><div class="thumb"></div></div>
            <svg><use href="#w-down"/></svg>
          </div>
        </div>
      </aside>

      <div class="grip-col"><i class="dots-v"></i></div>

      <section class="design">
        <header class="design-bar">
          <p><strong>Synthesized Design</strong> <span class="dim">-</span> xc7z010clg400-1 <span class="dim">(active)</span></p>
          <span class="design-help">?</span>
        </header>

        <div class="upper">
          <div class="left-stack">
            <section>
              <header class="panel-head">
                <h2>Device Constraints</h2>
                <button aria-label="Help"><svg><use href="#w-help"/></svg></button>
                <button aria-label="Minimize"><svg><use href="#w-min"/></svg></button>
                <button aria-label="Maximize"><svg><use href="#w-max"/></svg></button>
                <button aria-label="Float"><svg><use href="#w-float"/></svg></button>
                <button aria-label="Close"><svg><use href="#w-close"/></svg></button>
              </header>
              <div class="panel-tools">
                <button aria-label="Search"><svg><use href="#i-search"/></svg></button>
                <button aria-label="Collapse All"><svg><use href="#i-collapse"/></svg></button>
                <button aria-label="Expand All"><svg><use href="#i-expand"/></svg></button>
                <button class="on" aria-label="Auto Scroll"><svg><use href="#i-auto"/></svg></button>
                <button class="remove" aria-label="Remove"><svg><use href="#i-minus"/></svg></button>
              </div>
              <div class="vref"><svg><use href="#w-caret"/></svg>Internal VREF</div>
              <div class="tree-box">
                <ul class="tree">
                  <li><svg><use href="#i-folder"/></svg>0.6V</li>
                  <li><svg><use href="#i-folder"/></svg>0.675V</li>
                  <li><svg><use href="#i-folder"/></svg>0.75V</li>
                  <li><svg><use href="#i-folder"/></svg>0.9V</li>
                  <li class="parent"><svg class="box" viewBox="0 0 13 13"><path d="M.5.5h12v12H.5z" fill="#f4f4f4" stroke="#888"/><path d="M3 6.500h7" stroke="#2a4a9a" stroke-width="1.500"/></svg><svg><use href="#i-folderopen"/></svg>NONE&nbsp;<span class="dim">(2)</span></li>
                  <li class="child"><svg><use href="#i-bank"/></svg>I/O Bank 34</li>
                  <li class="child"><svg><use href="#i-bank"/></svg>I/O Bank 35</li>
                </ul>
                <div class="scroll">
                  <svg><use href="#w-up"/></svg>
                  <div class="track tree-track"><div class="thumb"></div></div>
                  <svg><use href="#w-down"/></svg>
                </div>
              </div>
              <div class="tabs">
                <svg class="slant"><use href="#w-slant"/></svg>
                <button class="tab"><svg><use href="#i-sources"/></svg>Sources</button>
                <button class="tab before-active"><svg viewBox="0 0 24 24"><text class="glyph gold" x="12" y="21">N</text></svg>Netlist</button>
                <svg class="slant over"><use href="#w-slant"/></svg>
                <button class="tab active"><svg><use href="#i-devcon"/></svg>Device Constraints</button>
              </div>
            </section>

            <div class="grip-row"><i class="dots-h"></i></div>

            <section>
              <header class="panel-head">
                <h2>Properties</h2>
                <button aria-label="Help"><svg><use href="#w-help"/></svg></button>
                <button aria-label="Minimize"><svg><use href="#w-min"/></svg></button>
                <button aria-label="Maximize"><svg><use href="#w-max"/></svg></button>
                <button aria-label="Float"><svg><use href="#w-float"/></svg></button>
                <button aria-label="Close"><svg><use href="#w-close"/></svg></button>
              </header>
              <div class="panel-tools">
                <button aria-label="Back"><svg><use href="#i-left"/></svg></button>
                <button aria-label="Forward"><svg><use href="#i-right"/></svg></button>
                <button class="on" aria-label="Auto Properties"><svg><use href="#i-propsel"/></svg></button>
                <button aria-label="Select"><svg><use href="#i-cursor"/></svg></button>
              </div>
              <div class="empty">Select an object to see properties</div>
              <div class="tabs">
                <svg class="slant"><use href="#w-slant"/></svg>
                <button class="tab active"><svg><use href="#i-prop"/></svg>Properties</button>
                <button class="tab"><svg><use href="#i-clkreg"/></svg>Clock Regions</button>
              </div>
            </section>
          </div>

          <div class="grip-col inner"><i class="dots-v"></i></div>

          <section class="viewer">
            <header class="viewer-head">
              <div class="top-tab active"><svg><use href="#i-package"/></svg>Package<button aria-label="Close Package"><svg><use href="#w-close"/></svg></button></div>
              <div class="top-tab"><svg><use href="#i-device"/></svg>Device<button aria-label="Close Device"><svg><use href="#w-close"/></svg></button></div>
              <div class="win-btns">
                <button aria-label="Help"><svg><use href="#w-help"/></svg></button>
                <button aria-label="Maximize"><svg><use href="#w-max"/></svg></button>
                <button aria-label="Float"><svg><use href="#w-float"/></svg></button>
                <button aria-label="Close"><svg><use href="#w-close"/></svg></button>
              </div>
            </header>
            <div class="viewer-body">
              <div class="side-tools">
                <button aria-label="Dock"><svg><use href="#i-dock"/></svg></button>
                <i class="hsep"></i>
                <button aria-label="Back"><svg><use href="#i-left"/></svg></button>
                <button aria-label="Forward"><svg><use href="#i-right"/></svg></button>
                <i class="hsep"></i>
                <button aria-label="Zoom In"><svg><use href="#i-zoomin"/></svg></button>
                <button aria-label="Zoom Out"><svg><use href="#i-zoomout"/></svg></button>
                <button aria-label="Zoom Fit"><svg><use href="#i-zoomfit"/></svg></button>
                <button aria-label="Select Area"><svg><use href="#i-areasel"/></svg></button>
                <button aria-label="Fit Selection"><svg><use href="#i-fit"/></svg></button>
                <button aria-label="Autofit Selection"><svg><use href="#i-fitok"/></svg></button>
                <button aria-label="Routing"><svg><use href="#i-route"/></svg></button>
                <button class="on" aria-label="Auto Check"><svg><use href="#i-pincheck"/></svg></button>
                <button aria-label="Place Ports"><svg><use href="#i-pinup"/></svg></button>
                <button aria-label="Show Differential Pairs"><svg viewBox="0 0 24 24"><path d="M10 9l5 5" stroke="#345" stroke-width="2"/><text class="glyph red" x="6" y="12">p</text><text class="glyph red" x="18" y="23">n</text></svg></button>
              </div>
              <div class="canvas"><svg id="chip" class="chip" viewBox="-2 -2 394 394" role="img" aria-label="Package pins"></svg></div>
            </div>
          </section>
        </div>

        <div class="grip-row wide"><i class="dots-h"></i></div>

        <section class="ports">
          <header class="panel-head">
            <h2>I/O Ports</h2>
            <button aria-label="Help"><svg><use href="#w-help"/></svg></button>
            <button aria-label="Minimize"><svg><use href="#w-min"/></svg></button>
            <button aria-label="Maximize"><svg><use href="#w-max"/></svg></button>
            <button aria-label="Float"><svg><use href="#w-float"/></svg></button>
            <button aria-label="Close"><svg><use href="#w-close"/></svg></button>
          </header>
          <div class="ports-body">
            <div class="side-tools">
              <button aria-label="Search"><svg><use href="#i-search"/></svg></button>
              <button aria-label="Collapse All"><svg><use href="#i-collapse"/></svg></button>
              <button aria-label="Expand All"><svg><use href="#i-expand"/></svg></button>
              <button class="on" aria-label="Group"><svg><use href="#i-group"/></svg></button>
              <button aria-label="Add Interface"><svg><use href="#i-addfolder"/></svg></button>
              <button aria-label="Schematic"><svg><use href="#i-schem"/></svg></button>
              <button class="on" aria-label="Auto Scroll"><svg><use href="#i-auto"/></svg></button>
              <button aria-label="Apply"><svg><use href="#i-check"/></svg></button>
            </div>
            <div class="table-box">
              <table>
                <colgroup>
                  <col class="c-dir"><col class="c-pin"><col class="c-intf"><col class="c-neg"><col class="c-pkg"><col class="c-fixed"><col class="c-bank"><col class="c-std"><col class="c-v"><col class="c-v"><col class="c-drive"><col>
                </colgroup>
                <thead>
                  <tr><th>Direction</th><th>Board Part Pin</th><th>Board Part Interface</th><th>Neg Diff Pair</th><th>Package Pin</th><th>Fixed</th><th>Bank</th><th>I/O Std</th><th>Vcco</th><th>Vref</th><th>Drive Strength</th><th>Slew</th></tr>
                </thead>
                <tbody>
                  <tr class="blank"><td colspan="12"></td></tr>
                  <tr class="odd"><td>INOUT</td><td></td><td></td><td></td><td></td><td class="tick"><svg><use href="#i-check"/></svg></td><td class="num">502</td><td>(Multiple)*</td><td class="num">1.500</td><td>(Multiple)</td><td></td><td>(Multiple)</td></tr>
                  <tr><td>INOUT</td><td></td><td></td><td></td><td></td><td class="tick"><svg><use href="#i-check"/></svg></td><td class="num">(Multiple)</td><td>(Multiple)*</td><td class="num">(Multiple)</td><td>(Multiple)</td><td>(Multiple)*</td><td>(Multiple)</td></tr>
                  <tr class="blank odd"><td colspan="12"></td></tr>
                </tbody>
              </table>
              <div class="hscroll">
                <svg><use href="#w-left"/></svg>
                <div class="htrack"><div class="thumb"></div></div>
              </div>
            </div>
          </div>
          <div class="tabs">
            <svg class="slant"><use href="#w-slant"/></svg>
            <button class="tab"><svg><use href="#i-console"/></svg>Tcl Console</button>
            <button class="tab"><svg><use href="#i-messages"/></svg>Messages</button>
            <button class="tab"><svg><use href="#i-log"/></svg>Log</button>
            <button class="tab"><svg><use href="#i-reports"/></svg>Reports</button>
            <button class="tab"><svg><use href="#i-runs"/></svg>Design Runs</button>
            <button class="tab before-active"><svg><use href="#i-pin"/></svg>Package Pins</button>
            <svg class="slant over"><use href="#w-slant"/></svg>
            <button class="tab active"><svg><use href="#i-ports"/></svg>I/O Ports</button>
          </div>
        </section>
      </section>
    </main>
    <footer class="status"></footer>
  </div>

  <!-- hand drawn marks -->
  <svg class="marks" viewBox="0 0 1120 1048" aria-hidden="true">
    <path d="M963 38C935 37 915 34 889 31C855 27 815 21 784 21C765 22 760 25 745 24C733 22 722 21 715 24C704 28 699 33 697 40C696 50 688 50 690 58C694 66 720 79 748 82C780 85 830 86 866 86C900 86 935 83 957 76C966 66 969 52 970 40"/>
    <path d="M1016 1031C990 1027 945 1026 915 1017C895 1008 880 998 880 986C882 968 900 955 945 953C1000 955 1050 968 1081 990C1092 1002 1090 1010 1075 1027C1055 1038 1042 1038 1030 1046L1005 1018"/>
  </svg>

  <script>
    const $chip = document.getElementById('chip');
    const size = 19.5; // one ball cell

    // o: i/o pad, c: circle, g: ground, r: power, w: unused power, x: not connected
    // p: plain pad, b: marked circle, h: hexagon, q: filled, B: power on blue, K / S: config
    const rows = [
      'ooroooogooooroooogoc',
      'goooorooooGoooorooCc',
      'ooogooooGooooGoooorc',
      'orooooroooorooooGccc',
      'oooorooooGpoooroccCg',
      'oogooKgwKgKoooocbrcc',
      'rooooKwwwgrgrcbgcccc',
      'oooropgwgrgrgrchhhgc',
      'ogoooKwgSSrgrcccrhcc',
      'oooogrgwSSgrgcgchhcr',
      'oorooKwgSSrgrcchhgcc',
      'gooooKgwqqgrgccrcccc',
      'ooogoxwgrgrgrgccchrh',
      'orooopgwgrgrgcccgchh',
      'oooorxwgrKKgrbrcbccg',
      'oogoxxgBxcccgccccrcc',
      'roooxgxxxxBcchhgchhc',
      'ooorxxxxgxxccrccccgc',
      'ogoooxBxxxxgccccrccc',
      'oooogxxxxBxxxcgccccr'
    ];

    // region: outline colour, fill colour, corners in cells
    const regions = [
      ['#a0588a', '#2e1a28', '0,0 4,0 4,4 5,4 5,7 6,7 6,8 5,8 5,13 6,13 6,14 5,14 5,15 4,15 4,18 5,18 5,20 0,20'],
      ['#d810b0', '#430038', '4,0 8,0 8,3 9,3 9,5 5,5 5,4 4,4'],
      ['#3c10f0', '#140a48', '8,0 19,0 19,1 18,1 18,3 16,3 16,5 15,5 15,6 11,6 11,5 9,5 9,2 8,2'],
      ['#1090a8', '#042e36', '19,0 20,0 20,12 16,12 16,13 13,13 13,6 15,6 15,5 16,5 16,4 17,4 17,3 18,3 18,1 19,1'],
      ['#a8b020', '#34360c', '16,12 20,12 20,20 13,20 13,19 11,19 11,16 9,16 9,15 13,15 13,13 16,13'],
      ['#d86098', '#481828', '5,5 6,5 6,7 5,7'],
      ['#d86098', '#481828', '8,5 11,5 11,6 8,6'],
      ['#d86098', '#481828', '5,8 6,8 6,12 5,12'],
      ['#d86098', '#481828', '8,8 10,8 10,12 8,12'],
      ['#d86098', '#481828', '9,14 11,14 11,15 9,15']
    ];

    const toPx = pts => pts.split(' ').map(p => p.split(',').map(n => n * size).join(',')).join(' ');
    const power = color => `<path d="M5 10h10M8 5v10" stroke="${color}" stroke-width="2" fill="none"/><path d="M9 6l5 4-5 4z" fill="${color}"/>`;
    const pad = '<rect x="2" y="2" width="16" height="16" fill="#808080"/>';

    function cell(kind) {
      switch (kind) {
        case 'o': return pad + '<rect x="5" y="7" width="10" height="6" fill="#d07030"/>';
        case 'p': return pad;
        case 'g':
        case 'G': return '<rect x="1" y="1" width="18" height="18" fill="#000"/><path d="M10 4v9M6 10h8M7 12h6M9 14h2" stroke="#4c7c3a" stroke-width="2"/>';
        case 'r': return power('#a04048');
        case 'w': return power('#5c5c5c');
        case 'x': return '<rect x="2" y="2" width="16" height="16" fill="#505050" stroke="#666"/><path d="M5 5l10 10M15 5L5 15M5 5h3M12 5h3M5 15h3M12 15h3" stroke="#303030"/>';
        case 'c':
        case 'C': return '<circle cx="10" cy="10" r="8" fill="#808080" stroke="#3c4478"/>';
        case 'b': return '<circle cx="10" cy="10" r="8" fill="#808080" stroke="#3c4478"/>' + power('#2020d8');
        case 'h': return '<path d="M10 2l8 4v8l-8 4-8-4V6z" fill="#9ccaff" stroke="#b898a8"/>';
        case 'q': return '<rect x="3" y="3" width="14" height="13" fill="#ff6a00"/>';
        case 'B': return '<rect width="19" height="19" fill="#1010b0"/>' + power('#c04050');
        case 'K': return '<text x="10" y="15">C</text>';
        case 'S': return '<text x="10" y="15">S</text>';
      }
    }

    let svg = '<rect x="-1" y="-1" width="392" height="392" fill="#000"/>';
    regions.forEach(r => {
      svg += `<polygon points="${toPx(r[2])}" fill="${r[1]}"/>`;
    });

    // grid lines
    for (let i = 1; i < 20; i++) {
      svg += `<path d="M${i * size} 0V390M0 ${i * size}H390" stroke="#a0a0a0" stroke-opacity=".3" stroke-width="2"/>`;
    }
    rows.forEach((row, y) => {
      [...row].forEach((kind, x) => {
        svg += `<g transform="translate(${x * size} ${y * size})">${cell(kind)}</g>`;
      });
    });

    // outlines are clipped so that neighbours do not overlap
    regions.forEach((r, i) => {
      svg += `<clipPath id="clip${i}"><polygon points="${toPx(r[2])}"/></clipPath>`;
      svg += `<polygon points="${toPx(r[2])}" clip-path="url(#clip${i})" fill="none" stroke="${r[0]}" stroke-width="8"/>`;
    });
    svg += '<rect x="-1" y="-1" width="392" height="392" fill="none" stroke="#e8e0e8" stroke-width="2"/>';
    $chip.innerHTML = svg;
  </script>
</body>
</html>
```

FILE: styles.css
```css
* {
  box-sizing: border-box;
}

body {
  margin: 0;
  overflow: hidden;
  background: #fff;
  color: #1c1c1c;
  font-family: "Open Sans", "Noto Sans", sans-serif;
  font-size: 15px;
  line-height: 20px;
}

button {
  padding: 0;
  border: 1px solid transparent;
  background: none;
  color: inherit;
  font: inherit;
}

button svg {
  display: block;
}

h2,
p,
ul {
  margin: 0;
  padding: 0;
}

h2 {
  font-size: 15px;
  font-weight: 400;
}

strong,
.section.selected,
.tab.active,
.top-tab.active {
  color: #000;
  font-family: "DejaVu Sans", sans-serif;
  font-size: 14px;
  font-weight: 700;
}

li {
  list-style: none;
}

.sprite {
  position: absolute;
  width: 0;
  height: 0;
}

.glyph {
  font: bold 24px "Liberation Sans", sans-serif;
  text-anchor: middle;
}

.glyph.gold {
  fill: #e8b820;
  stroke: #8e6a0c;
}

.glyph.red {
  fill: #e8481c;
  font-size: 20px;
}

.dim {
  color: #777;
}

/* the window is a bit wider than the screen */
.app {
  display: flex;
  flex-direction: column;
  width: calc(100% + 23px);
  height: 100vh;
  padding-top: 3px;
}

/* menu */
.menubar {
  display: flex;
  align-items: center;
  gap: 22px;
  height: 32px;
  padding: 0 0 4px 9px;
  border-top: 1px solid #c8c8c8;
  background: #f5f5f5;
}

.menubar a {
  color: inherit;
  text-decoration: none;
}

.menubar u {
  text-underline-offset: 3px;
}

.search {
  display: flex;
  align-items: center;
  gap: 2px;
  width: 296px;
  height: 27px;
  margin-left: auto;
  padding-left: 6px;
  border: 2px solid #b9b9c4;
  background: #fff;
}

.search svg {
  width: 28px;
  height: 20px;
}

.search input {
  flex: 1;
  min-width: 0;
  padding: 0;
  border: 0;
  font: inherit;
}

.search input::placeholder {
  color: #888;
}

/* main toolbar */
.toolbar {
  display: flex;
  align-items: center;
  height: 44px;
  padding: 0 0 3px 2px;
  border-top: 1px solid #c4c4c4;
  border-bottom: 2px solid #adadad;
  background: #efefef;
}

.toolbar button {
  flex: none;
  width: 36px;
  height: 32px;
  padding: 3px 5px;
}

.toolbar button svg {
  width: 24px;
  height: 24px;
}

.has-menu {
  background: linear-gradient(135deg, transparent 50%, #444 50%) no-repeat right bottom / 8px 8px;
}

.sep {
  flex: none;
  width: 2px;
  height: 24px;
  margin: 0 3px;
  background: #aaa;
}

.combo {
  display: flex;
  flex: none;
  align-items: center;
  width: 242px;
  height: 30px;
  margin: 0 6px 0 5px;
  padding: 0 8px 0 6px;
  border: 2px solid #b5b5bb;
  background: linear-gradient(#fff, #f0f0f0);
}

.combo-icon {
  width: 20px;
  height: 20px;
}

.combo select {
  flex: 1;
  appearance: none;
  padding: 0 3px;
  border: 0;
  background: none;
  color: inherit;
  font: inherit;
}

.combo-caret {
  width: 12px;
  height: 12px;
}

.run-state {
  width: 225px;
  margin-left: auto;
  white-space: nowrap;
}

/* common panels */
.main {
  display: flex;
  flex: 1;
  min-height: 0;
  padding-bottom: 5px;
  background: #f0f0f0;
}

.panel-head {
  display: flex;
  align-items: center;
  height: 30px;
  padding: 0 14px 0 8px;
  background: linear-gradient(#fff, #e4e4e4);
}

.panel-head h2 {
  flex: 1;
}

.panel-head button {
  width: 28px;
  padding: 0 7px;
}

.panel-head button svg,
.win-btns svg {
  width: 13px;
  height: 13px;
}

.panel-tools {
  display: flex;
  align-items: center;
  height: 38px;
  padding-left: 2px;
  background: #efefef;
}

.panel-tools button,
.side-tools button {
  flex: none;
  width: 33px;
  height: 33px;
  padding: 3px 4px;
}

.panel-tools svg,
.side-tools svg {
  width: 23px;
  height: 23px;
}

.panel-tools .on,
.side-tools .on {
  border: 2px solid #aaa;
  background: linear-gradient(#ffcb85, #ffae55);
  padding: 3px;
}

.side-tools {
  display: flex;
  flex-direction: column;
  align-items: center;
  background: #efefef;
}

.scroll {
  display: flex;
  flex-direction: column;
  align-items: center;
  background: #f0f0f0;
}

.scroll svg,
.hscroll svg {
  flex: none;
  width: 12px;
  height: 12px;
  margin: 5px;
}

.track {
  flex: 1;
  width: 100%;
}

.thumb {
  background: #cdcdcd;
}

.tabs {
  display: flex;
  height: 28px;
  margin-top: 3px;
  padding-left: 12px;
  border-top: 1px solid #aaa;
}

.tab {
  display: flex;
  align-items: center;
  gap: 6px;
  height: 27px;
  padding: 0 13px 0 11px;
  border: 1px solid #aaa;
  border-width: 0 1px 1px 0;
  border-radius: 0 0 5px 5px;
  background: linear-gradient(#eee, #fff);
  white-space: nowrap;
}

.tab svg {
  width: 18px;
  height: 18px;
}

.slant + .tab {
  padding-left: 4px;
  border-bottom-left-radius: 0;
}

.tab.active {
  padding-right: 10px;
  background: #f7f7f7;
}

.tab.before-active {
  padding-right: 16px;
  border-right: 0;
}

.slant {
  flex: none;
  width: 28px;
  height: 28px;
}

.slant.over {
  position: relative;
  margin-left: -24px;
}

.grip-row {
  display: flex;
  align-items: center;
  justify-content: center;
  height: 14px;
}

.grip-row.wide {
  height: 13px;
}

.dots-h {
  width: 51px;
  height: 4px;
  background: repeating-linear-gradient(90deg, #999 0 3px, transparent 3px 6px);
}

.dots-v {
  width: 4px;
  height: 51px;
  background: repeating-linear-gradient(#999 0 3px, transparent 3px 6px);
}

.grip-col {
  display: flex;
  align-items: center;
  justify-content: center;
  width: 13px;
}

/* flow navigator */
.flow {
  display: flex;
  flex-direction: column;
  width: 338px;
  border: 1px solid #aaa;
  border-width: 0 2px 2px 1px;
  background: #f5f5f5;
}

.flow .panel-head {
  height: 36px;
  padding-right: 2px;
}

.flow .panel-head button {
  width: 24px;
  padding: 0 5px;
}

.flow .panel-tools {
  padding-left: 4px;
}

.flow-body {
  display: flex;
  flex: 1;
  min-height: 0;
}

.flow-list {
  flex: 1;
  overflow: hidden;
}

.item,
.section {
  display: flex;
  align-items: center;
  height: 33px;
}

.item {
  gap: 7px;
  padding-left: 63px;
}

.item svg {
  width: 24px;
  height: 24px;
}

.item .twisty {
  width: 12px;
  height: 12px;
  margin-right: 5px;
}

.with-twisty {
  padding-left: 39px;
}

.sub {
  padding-left: 91px;
}

.hidden-part {
  margin-top: -26px;
}

.section {
  gap: 13px;
  margin: 17px 2px 0;
  padding-left: 8px;
}

.section svg {
  width: 11px;
  height: 11px;
}

.section.selected {
  border: 2px solid #8fb4dc;
  border-radius: 4px;
  padding-left: 6px;
  background: linear-gradient(#e0ebf7, #b4cfea);
}

.flow .scroll {
  width: 20px;
}

.flow-track {
  padding: 234px 0 82px;
}

.flow-track .thumb {
  height: 100%;
}

/* design area */
.design {
  display: flex;
  flex: 1;
  flex-direction: column;
  min-width: 0;
  padding: 2px 0 5px 2px;
  border-left: 1px solid #aaa;
  border-bottom: 2px solid #aaa;
  background: #f5f5f5;
}

.design-bar {
  display: flex;
  align-items: center;
  justify-content: space-between;
  height: 34px;
  padding: 0 36px 0 11px;
  border: 2px solid #8fb4dc;
  border-radius: 4px;
  background: linear-gradient(#e0ebf7, #b4cfea);
}

.design-help {
  color: #777;
  font-size: 18px;
  font-weight: 700;
}

.upper {
  display: flex;
  margin-top: 2px;
}

.left-stack {
  width: 572px;
  padding-top: 4px;
}

.left-stack .panel-head,
.left-stack .panel-tools,
.vref,
.tree-box,
.empty {
  margin: 0 4px 0 6px;
}

.panel-tools .remove {
  padding: 4px 6px;
}

.panel-tools .remove svg {
  width: 21px;
}

.vref {
  display: flex;
  align-items: center;
  gap: 13px;
  height: 30px;
  padding-left: 7px;
  border: 1px solid #b0b0b8;
  border-bottom-width: 2px;
  background: linear-gradient(#fff, #f0f0f0);
}

.vref svg {
  width: 12px;
  height: 12px;
}

.tree-box {
  display: flex;
  height: 159px;
  border: 1px solid #aaa;
  border-top: 0;
  background: #fff;
  overflow: hidden;
}

.tree {
  flex: 1;
  padding: 1px 0 0 13px;
}

.tree li {
  display: flex;
  align-items: center;
  height: 24px;
  border-left: 1px dotted #888;
}

.tree li::before {
  content: "";
  width: 14px;
  border-top: 1px dotted #888;
}

.tree svg {
  width: 19px;
  height: 19px;
  margin-right: 8px;
}

.tree .parent {
  border-left: 0;
}

.tree .parent::before {
  display: none;
}

.tree .parent .box {
  width: 13px;
  height: 13px;
  margin: 0 8px 0 -6px;
}

.tree .child {
  margin-left: 28px;
}

.tree-box .scroll {
  width: 20px;
}

.tree-track .thumb {
  height: 94%;
}

.empty {
  display: flex;
  align-items: center;
  justify-content: center;
  height: 92px;
  border: 1px solid #b8b8b8;
  background: #eee;
  color: #888;
}

.grip-col.inner {
  width: 9px;
}

/* package view */
.viewer {
  display: flex;
  flex: 1;
  flex-direction: column;
  min-width: 0;
  border: 2px solid #999;
  border-right: 0;
}

.viewer-head {
  display: flex;
  align-items: flex-end;
  height: 38px;
  padding-left: 11px;
  border-bottom: 2px solid #b0b0b0;
}

.top-tab {
  display: flex;
  align-items: center;
  gap: 6px;
  height: 28px;
  padding: 0 8px 0 7px;
  border: 1px solid #aaa;
  border-width: 1px 1px 0;
  border-radius: 5px 5px 0 0;
  background: linear-gradient(#fff, #f0f0f0);
}

.top-tab svg {
  width: 18px;
  height: 18px;
}

.top-tab button {
  margin-left: 12px;
}

.top-tab button svg {
  width: 13px;
  height: 13px;
  stroke: #000;
}

.win-btns {
  display: flex;
  margin: 0 6px 11px auto;
}

.win-btns button {
  width: 32px;
  padding: 0 9px;
}

.viewer-body {
  display: flex;
  flex: 1;
  padding: 2px 0 4px 6px;
}

.viewer .side-tools {
  width: 34px;
  padding-top: 2px;
}

.hsep {
  width: 22px;
  height: 1px;
  margin: 3px 0;
  background: #999;
}

.canvas {
  display: flex;
  flex: 1;
  align-items: center;
  justify-content: center;
  background: #000;
}

.chip {
  width: 394px;
  height: 394px;
}

.chip text {
  fill: #ff6a00;
  font: bold 14px "Liberation Mono", monospace;
  text-anchor: middle;
}

/* ports table */
.ports {
  display: flex;
  flex: 1;
  flex-direction: column;
  min-height: 0;
}

.ports .panel-head,
.ports-body {
  margin-left: 6px;
}

.ports-body {
  display: flex;
  flex: 1;
  min-height: 0;
}

.ports .side-tools {
  width: 37px;
}

.table-box {
  display: flex;
  flex: 1;
  flex-direction: column;
  justify-content: space-between;
  min-width: 0;
  border: 1px solid #bbb;
  border-bottom-width: 2px;
  background: #fff;
  overflow: hidden;
}

table {
  width: 100%;
  border-collapse: collapse;
  table-layout: fixed;
}

th {
  height: 38px;
  padding: 0 0 0 6px;
  border-right: 2px solid #e6e6e6;
  border-bottom: 1px solid #e6e6e6;
  font-weight: 400;
  text-align: left;
  white-space: nowrap;
}

td {
  height: 24px;
  padding: 0 2px 0 4px;
  border-right: 2px solid #f2f2f2;
  white-space: nowrap;
}

td:first-child {
  padding-left: 1px;
}

.odd td {
  border-right-color: #fff;
  background: #efefef;
}

.blank td {
  border-right: 0;
}

.num {
  text-align: right;
}

.tick svg {
  display: block;
  width: 20px;
  height: 20px;
  margin: 0 auto;
}

.c-dir { width: 96px; }
.c-pin { width: 123px; }
.c-intf { width: 169px; }
.c-neg { width: 143px; }
.c-pkg { width: 180px; }
.c-fixed { width: 60px; }
.c-bank { width: 90px; }
.c-std { width: 240px; }
.c-v { width: 78px; }
.c-drive { width: 126px; }

.hscroll {
  display: flex;
  align-items: center;
  height: 21px;
  background: #f0f0f0;
}

.htrack {
  flex: 1;
  padding: 0 309px 0 231px;
}

.htrack .thumb {
  height: 20px;
}

.status {
  height: 35px;
  border-top: 2px solid #aaa;
  border-bottom: 1px solid #ccc;
  background: #efefef;
}

/* marks lie over the whole window */
.marks {
  position: absolute;
  top: 0;
  left: 0;
  width: 1120px;
  height: 1048px;
  pointer-events: none;
}

.marks path {
  fill: none;
  stroke: #f00000;
  stroke-width: 3;
}
```
